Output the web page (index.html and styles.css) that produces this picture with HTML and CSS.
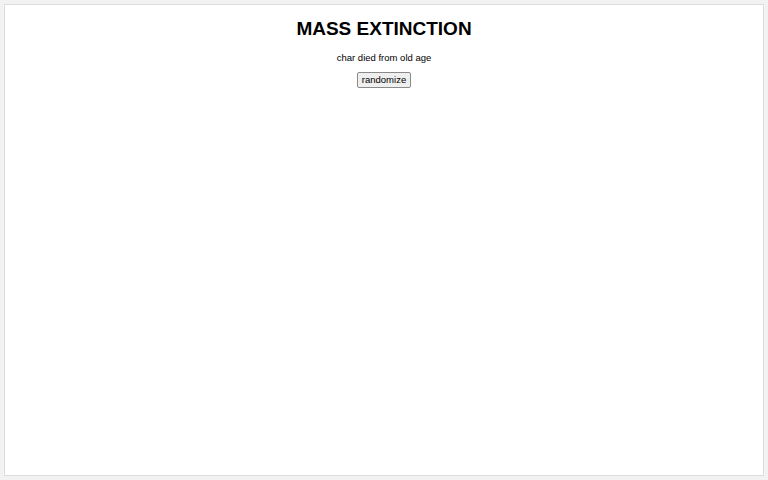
FILE: index.html
```html
<!DOCTYPE html>
<html lang="en">
<head>
    <meta charset="UTF-8">
    <meta name="viewport" content="width=device-width, initial-scale=1.0">
    <title>Mass Extinction</title>
    <link rel="stylesheet" href="styles.css">
</head>
<body>
    <!-- Pannello principale -->
    <div class="panel">
        <h1 class="title">MASS EXTINCTION</h1>
        <p class="status">char died from old age</p>
        <button class="randomize">randomize</button>
    </div>
</body>
</html>
```

FILE: styles.css
```css
* {
    margin: 0;
    padding: 0;
    box-sizing: border-box;
}

body {
    background: #f2f2f2;
    padding: 4px;
    font-family: "Liberation Sans", Arial, sans-serif;
}

.panel {
    height: 472px;
    background: #fff;
    border: 1px solid #dcdcdc;
    display: flex;
    flex-direction: column;
    align-items: center;
    padding-top: 12px;
}

.title {
    font-size: 19px;
    font-weight: bold;
    color: #000;
    line-height: 23px;
}

.status {
    font-size: 9.5px;
    margin-top: 12px;
    color: #000;
}

.randomize {
    margin-top: 9px;
    font-family: "Liberation Sans", Arial, sans-serif;
    font-size: 9.5px;
    padding: 1px 4px 2px;
    background: #efefef;
    border: 1px solid #8a8a8a;
    border-radius: 2px;
    color: #000;
}
```
